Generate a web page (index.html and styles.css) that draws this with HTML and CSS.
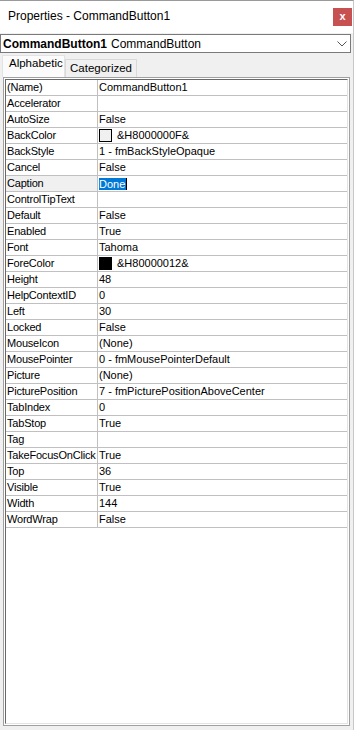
FILE: index.html
```html
<!DOCTYPE html>
<html lang="en">
  <head>
    <meta charset="utf-8">
    <title>Properties</title>
    <link rel="stylesheet" href="styles.css">
  </head>
  <body>
    <div class="window">
      <div class="titlebar">
        <span class="title">Properties - CommandButton1</span>
        <span class="close">x</span>
      </div>
      <div class="combo">
        <span class="combo-name">CommandButton1</span>
        <span class="combo-type">CommandButton</span>
        <svg class="chevron" width="10" height="6" viewBox="0 0 10 6">
          <path d="M0.5 0.5 L5 5 L9.5 0.5" fill="none" stroke="#555" stroke-width="1"/>
        </svg>
      </div>
      <div class="tabs">
        <div class="tab active">Alphabetic</div>
        <div class="tab">Categorized</div>
      </div>
      <div class="frame">
        <div class="grid">
          <div class="row"><div class="name">(Name)</div><div class="value">CommandButton1</div></div>
          <div class="row"><div class="name">Accelerator</div><div class="value"></div></div>
          <div class="row"><div class="name">AutoSize</div><div class="value">False</div></div>
          <div class="row"><div class="name">BackColor</div><div class="value"><span class="swatch light"></span>&amp;H8000000F&amp;</div></div>
          <div class="row"><div class="name">BackStyle</div><div class="value">1 - fmBackStyleOpaque</div></div>
          <div class="row"><div class="name">Cancel</div><div class="value">False</div></div>
          <div class="row selected"><div class="name">Caption</div><div class="value"><span class="edit">Done</span><span class="caret"></span></div></div>
          <div class="row"><div class="name">ControlTipText</div><div class="value"></div></div>
          <div class="row"><div class="name">Default</div><div class="value">False</div></div>
          <div class="row"><div class="name">Enabled</div><div class="value">True</div></div>
          <div class="row"><div class="name">Font</div><div class="value">Tahoma</div></div>
          <div class="row"><div class="name">ForeColor</div><div class="value"><span class="swatch dark"></span>&amp;H80000012&amp;</div></div>
          <div class="row"><div class="name">Height</div><div class="value">48</div></div>
          <div class="row"><div class="name">HelpContextID</div><div class="value">0</div></div>
          <div class="row"><div class="name">Left</div><div class="value">30</div></div>
          <div class="row"><div class="name">Locked</div><div class="value">False</div></div>
          <div class="row"><div class="name">MouseIcon</div><div class="value">(None)</div></div>
          <div class="row"><div class="name">MousePointer</div><div class="value">0 - fmMousePointerDefault</div></div>
          <div class="row"><div class="name">Picture</div><div class="value">(None)</div></div>
          <div class="row"><div class="name">PicturePosition</div><div class="value">7 - fmPicturePositionAboveCenter</div></div>
          <div class="row"><div class="name">TabIndex</div><div class="value">0</div></div>
          <div class="row"><div class="name">TabStop</div><div class="value">True</div></div>
          <div class="row"><div class="name">Tag</div><div class="value"></div></div>
          <div class="row"><div class="name">TakeFocusOnClick</div><div class="value">True</div></div>
          <div class="row"><div class="name">Top</div><div class="value">36</div></div>
          <div class="row"><div class="name">Visible</div><div class="value">True</div></div>
          <div class="row"><div class="name">Width</div><div class="value">144</div></div>
          <div class="row"><div class="name">WordWrap</div><div class="value">False</div></div>
        </div>
      </div>
    </div>
  </body>
</html>
```

FILE: styles.css
```css
body {
  margin: 0;
  font-family: "Liberation Sans", Arial, sans-serif;
  font-size: 11px;
  color: #000;
}

.window {
  width: 354px;
  height: 730px;
  box-sizing: border-box;
  background: #f0f0f0;
  border-top: 1px solid #9a9a9a;
  border-right: 1px solid #c8c8c8;
  display: flex;
  flex-direction: column;
}

.titlebar {
  height: 32px;
  background: #fff;
  display: flex;
  align-items: center;
  justify-content: space-between;
  padding-left: 8px;
}

.title {
  font-size: 12px;
  padding-bottom: 3px;
}

.close {
  width: 19px;
  height: 18px;
  margin-right: 1px;
  background: #c75050;
  color: #fff;
  font-weight: bold;
  font-size: 11px;
  display: flex;
  align-items: center;
  justify-content: center;
  line-height: 1;
  padding-bottom: 2px;
  box-sizing: border-box;
}

.combo {
  height: 19px;
  margin: 1px 2px 0 0;
  box-sizing: border-box;
  border: 1px solid #7a7a7a;
  background: #fff;
  display: flex;
  align-items: center;
  padding-left: 2px;
  font-size: 12px;
}

.combo-name {
  font-weight: bold;
  margin-right: 4px;
}

.chevron {
  margin-left: auto;
  margin-right: 3px;
}

.tabs {
  display: flex;
  align-items: flex-end;
  height: 23px;
  margin-top: 1px;
  padding-left: 2px;
  font-size: 11.5px;
}

.tab {
  height: 18px;
  box-sizing: border-box;
  padding: 2px 4px 0 4px;
  border: 1px solid #d9d9d9;
  border-bottom: none;
  background: #f0f0f0;
}

.tab.active {
  height: 22px;
  width: 63px;
  padding: 1px 0 0 6px;
  background: #fbfbfb;
  border-color: #e3e3e3;
}

.frame {
  margin: 0 3px 4px 3px;
  flex: 1;
  border: 1px solid #a0a0a0;
  padding: 1px;
  background: #fff;
  display: flex;
}

.grid {
  flex: 1;
  border-top: 1px solid #696969;
  border-left: 1px solid #696969;
  border-right: 1px solid #e3e3e3;
  border-bottom: 1px solid #e3e3e3;
}

.row {
  display: flex;
  height: 16px;
  box-sizing: border-box;
  border-bottom: 1px solid #c0c0c0;
}

.name {
  width: 90px;
  padding-left: 1px;
  border-right: 1px solid #c0c0c0;
  line-height: 15px;
  letter-spacing: -0.2px;
  white-space: nowrap;
  overflow: hidden;
}

.value {
  flex: 1;
  padding-left: 1px;
  line-height: 15px;
  white-space: nowrap;
  display: flex;
  align-items: center;
}

.selected .name {
  background: #f0f0f0;
}

.edit {
  background: #0078d7;
  color: #fff;
  line-height: 12px;
  padding-right: 1px;
}

.caret {
  width: 1px;
  height: 12px;
  background: #000;
}

.swatch {
  width: 11px;
  height: 11px;
  border: 1px solid #000;
  margin-right: 5px;
}

.swatch.light {
  background: #f0f0f0;
}

.swatch.dark {
  background: #000;
}
```
